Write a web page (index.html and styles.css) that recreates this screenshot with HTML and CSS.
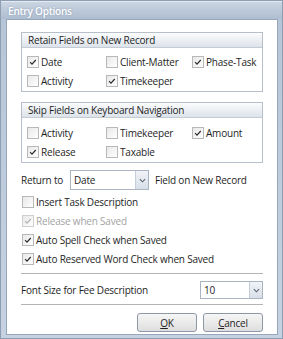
FILE: index.html
```html
<!DOCTYPE html>
<html lang="en">
<head>
    <meta charset="UTF-8">
    <meta name="viewport" content="width=device-width, initial-scale=1.0">
    <title>Entry Options</title>
    <link rel="stylesheet" href="styles.css">
</head>
<body>
    <div class="window">
        <div class="titlebar">Entry Options</div>

        <div class="content">
            <!-- Retain fields -->
            <div class="group">
                <div class="group-head">Retain Fields on New Record</div>
                <div class="group-grid">
                    <label class="check"><span class="box on"><svg viewBox="0 0 12 12"><path d="M2.5 6.2 L4.8 8.5 L9.3 3.6"/></svg></span>Date</label>
                    <label class="check"><span class="box"></span>Client-Matter</label>
                    <label class="check"><span class="box on"><svg viewBox="0 0 12 12"><path d="M2.5 6.2 L4.8 8.5 L9.3 3.6"/></svg></span>Phase-Task</label>
                    <label class="check"><span class="box"></span>Activity</label>
                    <label class="check"><span class="box on"><svg viewBox="0 0 12 12"><path d="M2.5 6.2 L4.8 8.5 L9.3 3.6"/></svg></span>Timekeeper</label>
                </div>
            </div>

            <!-- Skip fields -->
            <div class="group group-second">
                <div class="group-head">Skip Fields on Keyboard Navigation</div>
                <div class="group-grid">
                    <label class="check"><span class="box"></span>Activity</label>
                    <label class="check"><span class="box"></span>Timekeeper</label>
                    <label class="check"><span class="box on"><svg viewBox="0 0 12 12"><path d="M2.5 6.2 L4.8 8.5 L9.3 3.6"/></svg></span>Amount</label>
                    <label class="check"><span class="box on"><svg viewBox="0 0 12 12"><path d="M2.5 6.2 L4.8 8.5 L9.3 3.6"/></svg></span>Release</label>
                    <label class="check"><span class="box"></span>Taxable</label>
                </div>
            </div>

            <div class="return-row">
                <span class="return-label">Return to</span>
                <div class="combo combo-date">
                    <span class="combo-value">Date</span>
                    <span class="combo-btn"><svg viewBox="0 0 8 5"><path d="M1 1 L4 4 L7 1"/></svg></span>
                </div>
                <span>Field on New Record</span>
            </div>

            <div class="options">
                <label class="check"><span class="box"></span>Insert Task Description</label>
                <label class="check disabled"><span class="box on"><svg viewBox="0 0 12 12"><path d="M2.5 6.2 L4.8 8.5 L9.3 3.6"/></svg></span>Release when Saved</label>
                <label class="check"><span class="box on"><svg viewBox="0 0 12 12"><path d="M2.5 6.2 L4.8 8.5 L9.3 3.6"/></svg></span>Auto Spell Check when Saved</label>
                <label class="check"><span class="box on"><svg viewBox="0 0 12 12"><path d="M2.5 6.2 L4.8 8.5 L9.3 3.6"/></svg></span>Auto Reserved Word Check when Saved</label>
            </div>

            <div class="sep sep-first"></div>

            <div class="font-row">
                <span>Font Size for Fee Description</span>
                <div class="combo combo-size">
                    <span class="combo-value">10</span>
                    <span class="combo-btn"><svg viewBox="0 0 8 5"><path d="M1 1 L4 4 L7 1"/></svg></span>
                </div>
            </div>

            <div class="sep sep-second"></div>

            <div class="buttons">
                <button><u>O</u>K</button>
                <button><u>C</u>ancel</button>
            </div>
        </div>
    </div>
</body>
</html>
```

FILE: styles.css
```css
* {
    box-sizing: border-box;
}
body {
    margin: 0;
    font-family: "Open Sans", "Noto Sans", sans-serif;
    font-size: 10px;
    letter-spacing: -0.2px;
    color: #1e1e1e;
    background: #ffffff;
}
.window {
    width: 283px;
    height: 339px;
    display: flex;
    flex-direction: column;
    background: linear-gradient(#b6c4d7, #c6d2e1);
    border: 1px solid #8d9db2;
}
.titlebar {
    height: 18px;
    padding-left: 7px;
    line-height: 18px;
    font-size: 10px;
    color: #ffffff;
    font-weight: 600;
    text-shadow: 0 0 2px #8797ad;
    background: linear-gradient(#cbd5e2, #aebdd0);
    border-top: 1px solid #e4eaf2;
}
.content {
    flex: 1;
    margin: 0 4px 3px 5px;
    padding: 12px 14px 0;
    background: #ffffff;
    border: 1px solid #97a7bb;
}
.group {
    border: 1px solid #b6bfca;
    padding-bottom: 1px;
}
.group-second {
    margin-top: 10px;
}
.group-head {
    height: 15px;
    line-height: 15px;
    padding-left: 6px;
    background: linear-gradient(#fbfcfd, #dde3ea);
    border-bottom: 1px solid #c3cbd5;
}
.group-grid {
    display: grid;
    grid-template-columns: 79px 86px auto;
    padding: 4px 0 0 5px;
}
.group-second .group-grid {
    padding-top: 5px;
}
.check {
    display: flex;
    align-items: center;
    height: 19px;
}
.box {
    width: 12px;
    height: 12px;
    margin-right: 2px;
    border: 1px solid #b8b8b8;
    background: linear-gradient(135deg, #e8e8e8, #ffffff);
    flex: none;
}
.box svg {
    display: block;
    width: 10px;
    height: 10px;
}
.box path {
    fill: none;
    stroke: #2a2a2a;
    stroke-width: 1.4;
}
.disabled {
    color: #a3a3a3;
}
.disabled .box {
    border-color: #cfcfcf;
}
.disabled .box path {
    stroke: #b0b0b0;
}
.return-row {
    display: flex;
    align-items: center;
    height: 20px;
    margin-top: 7px;
}
.return-label {
    width: 49px;
}
.combo {
    display: flex;
    align-items: stretch;
    border: 1px solid #abb5c2;
    background: #ffffff;
}
.combo-date {
    width: 79px;
    height: 20px;
    margin-right: 6px;
}
.combo-size {
    width: 63px;
    height: 18px;
    margin-left: auto;
}
.combo-value {
    flex: 1;
    padding-left: 3px;
    display: flex;
    align-items: center;
}
.combo-btn {
    width: 13px;
    display: flex;
    align-items: center;
    justify-content: center;
    background: linear-gradient(#f0f3f7, #d8dfe8);
    border-left: 1px solid #c6ceda;
}
.combo-btn svg {
    width: 7px;
    height: 5px;
}
.combo-btn path {
    fill: none;
    stroke: #59636f;
    stroke-width: 1.2;
}
.options {
    margin-top: 2px;
}
.options .check {
    padding-left: 1px;
}
.sep {
    height: 1px;
    background: #b4b4b4;
}
.sep-first {
    margin-top: 5px;
}
.font-row {
    display: flex;
    align-items: center;
    height: 18px;
    margin-top: 7px;
}
.sep-second {
    margin-top: 5px;
}
.buttons {
    display: flex;
    justify-content: flex-end;
    gap: 6px;
    margin-top: 8px;
}
button {
    width: 60px;
    height: 19px;
    padding: 0;
    font-family: inherit;
    font-size: 10px;
    letter-spacing: -0.2px;
    color: #1e1e1e;
    background: linear-gradient(#f6f6f6, #dedede);
    border: 1px solid #8c98a6;
    border-radius: 3px;
}
```
